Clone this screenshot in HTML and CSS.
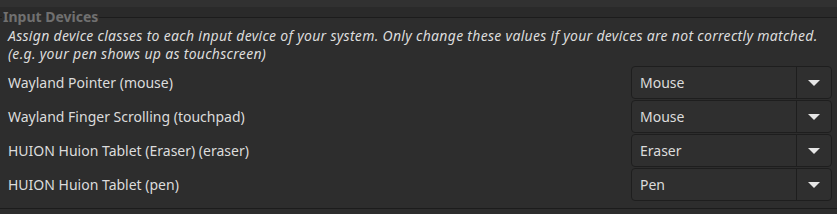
FILE: index.html
```html
<!DOCTYPE html>
<html lang="en">
<head>
    <meta charset="UTF-8">
    <meta name="viewport" content="width=device-width, initial-scale=1.0">
    <title>Input Devices</title>
    <link rel="stylesheet" href="styles.css">
</head>
<body>
    <div class="topbar"></div>
    <div class="group">
        <div class="group-head">
            <div class="line line-short"></div>
            <div class="group-title">Input Devices</div>
            <div class="line"></div>
        </div>
        <div class="desc">Assign device classes to each input device of your system. Only change these values if your devices are not correctly matched.<br>(e.g. your pen shows up as touchscreen)</div>
        <div class="rows">
            <div class="row">
                <div class="label">Wayland Pointer (mouse)</div>
                <div class="combo">
                    <div class="combo-value">Mouse</div>
                    <div class="combo-btn"><span class="arrow"></span></div>
                </div>
            </div>
            <div class="row">
                <div class="label">Wayland Finger Scrolling (touchpad)</div>
                <div class="combo">
                    <div class="combo-value">Mouse</div>
                    <div class="combo-btn"><span class="arrow"></span></div>
                </div>
            </div>
            <div class="row">
                <div class="label">HUION Huion Tablet (Eraser) (eraser)</div>
                <div class="combo">
                    <div class="combo-value">Eraser</div>
                    <div class="combo-btn"><span class="arrow"></span></div>
                </div>
            </div>
            <div class="row">
                <div class="label">HUION Huion Tablet (pen)</div>
                <div class="combo">
                    <div class="combo-value">Pen</div>
                    <div class="combo-btn"><span class="arrow"></span></div>
                </div>
            </div>
        </div>
    </div>
</body>
</html>
```

FILE: styles.css
```css
body {
    background-color: #2d2d2d;
    color: #dcdcdc;
    font-family: "Noto Sans", sans-serif;
    font-size: 14px;
    margin: 0; /* Remove default margin */
}

.topbar {
    background-color: #313131;
    height: 7px;
}

.group {
    border-bottom: 1px solid #1c1c1c;
    padding-bottom: 7px;
}

.group-head {
    align-items: center;
    background: linear-gradient(#2a2a2a 0, #2a2a2a 10px, #2d2d2d 10px);
    display: flex;
    height: 20px;
}

.line {
    background-color: #1c1c1c;
    flex: 1;
    height: 1px;
}

.line-short {
    flex: 0 0 2px;
}

.group-title {
    color: #707070;
    font-weight: 700;
    line-height: 20px;
    padding: 0 1px;
}

.desc {
    font-style: italic;
    letter-spacing: 0.3px;
    line-height: 18px;
    padding-left: 8px;
}

.rows {
    display: flex;
    flex-direction: column;
    gap: 1px;
    margin-top: 3px;
}

.row {
    align-items: center;
    display: flex;
    height: 33px;
    justify-content: space-between;
    padding: 0 5px 0 8px;
}

.combo {
    background-color: #2f2f2f;
    border: 1px solid #1e1e1e;
    border-radius: 4px;
    box-sizing: border-box;
    display: flex;
    height: 33px;
    width: 201px;
}

.combo-value {
    align-items: center;
    display: flex;
    flex: 1;
    padding-left: 8px;
}

.combo-btn {
    align-items: center;
    border-left: 1px solid #1e1e1e;
    display: flex;
    justify-content: center;
    width: 34px;
}

.arrow {
    border-left: 6px solid transparent;
    border-right: 6px solid transparent;
    border-top: 6px solid #e6e6e6;
    height: 0;
    width: 0;
}
```
